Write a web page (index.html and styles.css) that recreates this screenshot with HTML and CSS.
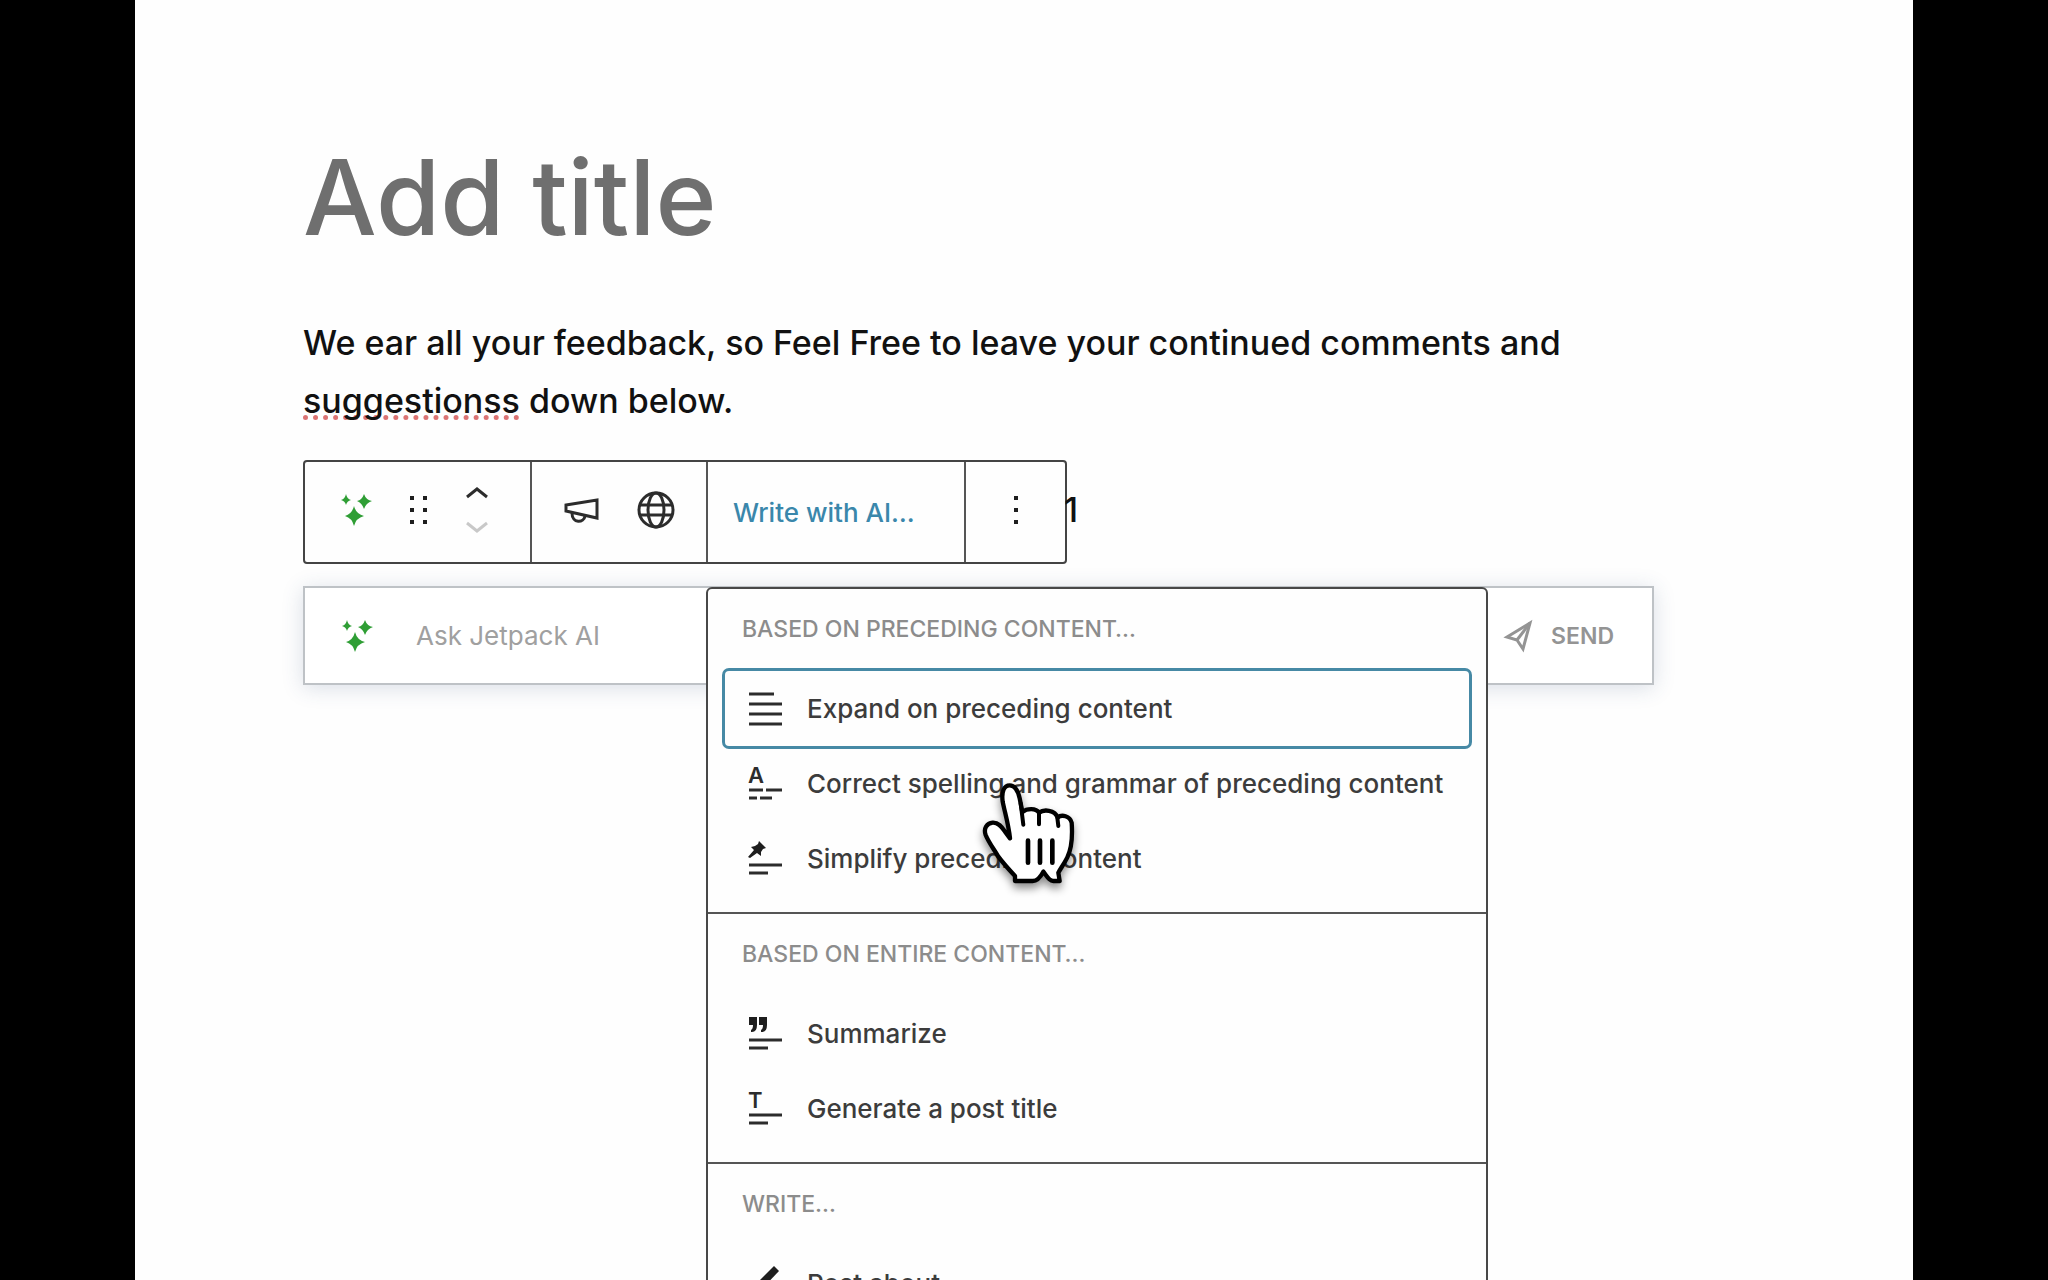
FILE: index.html
```
<!DOCTYPE html>
<html lang="en">
<head>
    <meta charset="UTF-8">
    <meta name="viewport" content="width=device-width, initial-scale=1.0">
    <title>Add title</title>
    <link rel="stylesheet" href="styles.css">
</head>
<body>

    <main class="editor">
        <input class="post-title" type="text" placeholder="Add title" aria-label="Add title">
        <p class="post-text">We ear all your feedback, so Feel Free to leave your continued comments and <span class="misspelled">suggestionss</span> down below.</p>

        <div class="toolbar-row">
            <div class="toolbar">
                <div class="group block-group">
                    <button type="button" aria-label="Jetpack AI">
                        <svg class="sparkle" width="32" height="32" viewBox="0 0 32 32">
                            <path d="M5 0Q6 5 10 6Q6 7 5 11Q4 7 0 6Q4 5 5 0Z"/>
                            <path d="M23 0Q25 6 31 7Q25 9 23 15Q21 9 16 7Q21 6 23 0Z"/>
                            <path d="M13 12Q15 20 23 22Q15 24 13 32Q11 24 4 22Q11 20 13 12Z"/>
                        </svg>
                    </button>
                    <button type="button" aria-label="Drag">
                        <svg width="18" height="30" viewBox="0 0 18 30">
                            <path d="M0 1h4v4H0zM13 1h4v4h-4zM0 13h4v4H0zM13 13h4v4h-4zM0 25h4v4H0zM13 25h4v4h-4z"/>
                        </svg>
                    </button>
                    <div class="movers">
                        <button type="button" aria-label="Move up">
                            <svg class="line" width="24" height="12" viewBox="0 0 24 12"><path d="M2 10L12 2L22 10"/></svg>
                        </button>
                        <button type="button" aria-label="Move down" disabled>
                            <svg class="line" width="24" height="12" viewBox="0 0 24 12"><path d="M2 2L12 10L22 2"/></svg>
                        </button>
                    </div>
                </div>
                <div class="group tone-group">
                    <button type="button" aria-label="Change tone">
                        <svg class="line" width="35" height="26" viewBox="0 0 35 26">
                            <path d="M2 8L33 3V21L2 14Z"/>
                            <path d="M8 16C8 27 20 26 21 19"/>
                        </svg>
                    </button>
                    <button type="button" aria-label="Translate">
                        <svg class="line" width="38" height="38" viewBox="0 0 38 38">
                            <circle cx="19" cy="19" r="17"/>
                            <ellipse cx="19" cy="19" rx="8" ry="17"/>
                            <path d="M3 14H35M3 24H35"/>
                        </svg>
                    </button>
                </div>
                <div class="group write-group">
                    <button type="button" class="write-button">Write with AI…</button>
                </div>
                <div class="group more-group">
                    <button type="button" aria-label="Options">
                        <svg width="4" height="30" viewBox="0 0 4 30"><path d="M0 1h4v4H0zM0 13h4v4H0zM0 25h4v4H0z"/></svg>
                    </button>
                </div>
            </div>
            <span class="behind">1</span>
        </div>

        <form class="ask">
            <svg class="sparkle" width="32" height="32" viewBox="0 0 32 32">
                <path d="M5 0Q6 5 10 6Q6 7 5 11Q4 7 0 6Q4 5 5 0Z"/>
                <path d="M23 0Q25 6 31 7Q25 9 23 15Q21 9 16 7Q21 6 23 0Z"/>
                <path d="M13 12Q15 20 23 22Q15 24 13 32Q11 24 4 22Q11 20 13 12Z"/>
            </svg>
            <input type="text" placeholder="Ask Jetpack AI" aria-label="Ask Jetpack AI">
            <button type="submit" class="send">
                <svg class="line" width="30" height="32" viewBox="0 0 30 32">
                    <path d="M27 3L4 17L14 20L20 29Z"/>
                    <path d="M27 3L14 20"/>
                </svg>
                SEND
            </button>

            <div class="menu">
                <section>
                    <h2>BASED ON PRECEDING CONTENT…</h2>
                    <button type="button" class="item focused">
                        <svg class="line" width="36" height="36" viewBox="0 0 36 36">
                            <path d="M1 3H26M1 13H34M1 23H34M1 33H34"/>
                        </svg>
                        Expand on preceding content
                    </button>
                    <button type="button" class="item">
                        <svg class="line" width="36" height="36" viewBox="0 0 36 36">
                            <text x="0" y="17">A</text>
                            <path d="M1 24H15M18 24H34M1 32H9M12 32H24"/>
                        </svg>
                        Correct spelling and grammar of preceding content
                    </button>
                    <button type="button" class="item">
                        <svg class="line" width="36" height="36" viewBox="0 0 36 36">
                            <path class="solid" d="M11 0L18 7L15 8L13 11L13 15L9 12L2 17L0 16L6 9L3 6L7 5L10 3Z"/>
                            <path d="M1 24H34M1 32H20"/>
                        </svg>
                        Simplify preceding content
                    </button>
                </section>
                <section>
                    <h2>BASED ON ENTIRE CONTENT…</h2>
                    <button type="button" class="item">
                        <svg class="line" width="36" height="36" viewBox="0 0 36 36">
                            <path class="solid" d="M1 1H9V9Q9 16 4 16H3V14Q5 13 5 9H1ZM11 1H19V9Q19 16 14 16H13V14Q15 13 15 9H11Z"/>
                            <path d="M1 24H34M1 32H20"/>
                        </svg>
                        Summarize
                    </button>
                    <button type="button" class="item">
                        <svg class="line" width="36" height="36" viewBox="0 0 36 36">
                            <text x="0" y="17">T</text>
                            <path d="M1 24H34M1 32H20"/>
                        </svg>
                        Generate a post title
                    </button>
                </section>
                <section>
                    <h2>WRITE…</h2>
                    <button type="button" class="item">
                        <svg class="line" width="36" height="36" viewBox="0 0 36 36">
                            <path class="solid" d="M26 0L31 5L12 25L4 27L6 20Z"/>
                        </svg>
                        Post about
                    </button>
                </section>

                <!-- hand pointer -->
                <svg class="pointer" width="140" height="130" viewBox="0 0 420 390">
                    <path class="hand" d="M165 333V318C148 300 130 280 115 260C100 235 85 215 77 195C70 175 80 160 98 158C115 157 125 170 135 185L150 205C145 160 135 130 128 95C124 65 132 46 149 46C165 46 174 62 179 85L187 126C200 115 228 113 237 128C250 118 285 118 293 143C305 132 330 138 335 158C338 200 335 235 322 262C312 282 302 295 295 308L299 333H280C268 333 262 320 250 305C242 320 232 333 218 333Z"/>
                    <path class="fingers" d="M182 100L190 164M237 128V163M292 143L295 168"/>
                    <path class="lines" d="M204 212V278M240 212V278M277 212V278"/>
                </svg>
            </div>
        </form>
    </main>

</body>
</html>
```
FILE: styles.css
```
* {
    box-sizing: border-box;
}
body {
    margin: 0;
    padding: 0 135px;
    height: 100vh;
    overflow: hidden;
    background: black;
    color: #1e1e1e;
    font-family: Inter, "Liberation Sans", sans-serif;
    font-size: 26px;
}
.editor {
    min-height: 100vh;
    padding: 132px 259px 0 168px;
    background: #fefefe;
}
button, input {
    padding: 0;
    border: none;
    outline: none;
    background: none;
    color: inherit;
    font: inherit;
}
button {
    cursor: pointer;
}
svg {
    display: block;
    flex: none;
    overflow: visible;
    fill: #1e1e1e;
}
.line {
    fill: none;
    stroke: #2c2c2c;
    stroke-width: 3px;
}
.line .solid {
    fill: #1e1e1e;
    stroke: none;
}
.line text {
    fill: #2c2c2c;
    stroke: none;
    font-size: 22px;
    font-weight: 600;
}
.sparkle {
    fill: #2f9e35;
}
.post-title {
    display: block;
    width: 100%;
    height: 130px;
    font-size: 104px;
    font-weight: 500;
}
.post-title::placeholder {
    color: #6f6f6f;
    opacity: 1;
}
.post-text {
    margin: 52px 0 30px;
    color: #111;
    font-size: 34px;
    font-weight: 500;
    line-height: 58px;
}
.misspelled {
    text-decoration: underline dotted #dc7373 5px;
    text-decoration-skip-ink: none;
    text-underline-offset: 2px;
}

/* block toolbar */
.toolbar-row {
    display: flex;
    align-items: center;
}
.toolbar {
    display: flex;
    height: 104px;
    border: 2px solid #444;
    border-radius: 4px;
}
.group {
    display: flex;
    align-items: center;
    justify-content: center;
    padding-bottom: 4px;
    border-right: 2px solid #555;
}
.block-group {
    width: 227px;
    padding-right: 5px;
    gap: 37px;
}
.movers {
    display: grid;
    gap: 22px;
}
.movers button:disabled {
    opacity: 0.25;
}
.tone-group {
    width: 176px;
    gap: 38px;
}
.write-group {
    width: 258px;
    justify-content: start;
    padding-bottom: 0;
    padding-left: 25px;
}
.write-button {
    color: #3a87ab;
    font-weight: 500;
}
.more-group {
    width: 99px;
    border-right: none;
}
.behind {
    margin-left: -3px;
    padding-bottom: 6px;
    color: #111;
    font-size: 34px;
    font-weight: 500;
}

/* prompt bar */
.ask {
    position: relative;
    display: flex;
    align-items: center;
    height: 99px;
    margin-top: 22px;
    padding: 0 38px 0 37px;
    background: white;
    border: 2px solid #bec2c6;
    box-shadow: 0 3px 20px rgba(50, 80, 120, 0.18);
}
.ask input {
    flex: 1;
    min-width: 0;
    margin-left: 42px;
}
.ask input::placeholder {
    color: #a0a0a0;
    opacity: 1;
}
.send {
    display: flex;
    align-items: center;
    gap: 18px;
    color: #949494;
    font-size: 23px;
    font-weight: 600;
}
.send .line {
    stroke: #949494;
}

/* suggestions menu */
.menu {
    position: absolute;
    top: -1px;
    left: 401px;
    width: 782px;
    background: #fefefe;
    border: 2px solid #484848;
    border-radius: 6px;
}
.menu section {
    padding: 26px 17px 16px;
}
.menu section + section {
    border-top: 2px solid #555;
}
.menu h2 {
    margin: 0 0 28px 17px;
    color: #8c8c8c;
    font-size: 23px;
    font-weight: 500;
    line-height: 28px;
}
.item {
    display: flex;
    align-items: center;
    gap: 23px;
    width: 100%;
    height: 75px;
    padding-left: 23px;
    border-radius: 4px;
    color: #3c3c3c;
    font-weight: 500;
    white-space: nowrap;
}
.focused {
    box-shadow: 0 0 0 3px #4689a5;
}
.pointer {
    position: absolute;
    top: 181px;
    left: 252px;
    stroke: black;
    stroke-linecap: round;
    stroke-linejoin: round;
    filter: drop-shadow(0 5px 4px rgba(0, 0, 0, 0.45));
}
.hand {
    fill: white;
    stroke-width: 13px;
}
.fingers {
    fill: none;
    stroke-width: 12px;
}
.lines {
    stroke-width: 14px;
}
```
